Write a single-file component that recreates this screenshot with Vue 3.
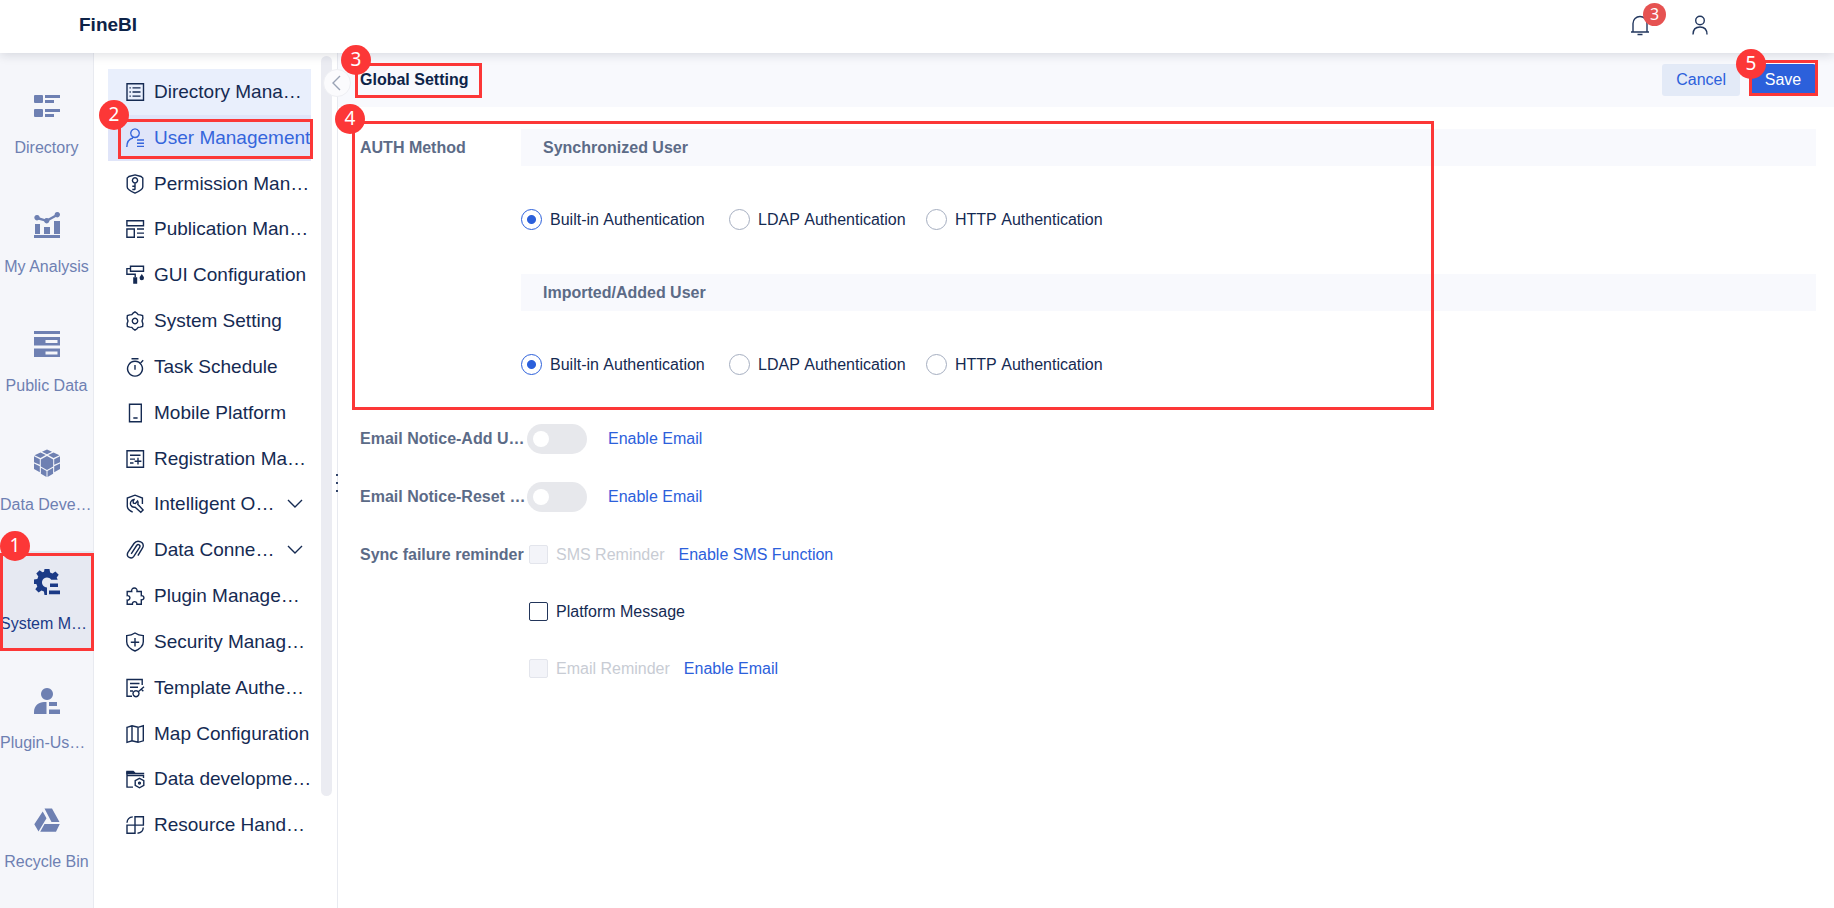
<template>
  <div class="page">
    <header class="topbar">
      <h1 class="brand">FineBI</h1>
      <div class="topbar-actions">
        <button class="icon-btn" type="button" aria-label="Notifications">
          <svg class="icon" viewBox="0 0 20 20">
            <path d="M1 17h18M3 17V8.500a7 7 0 0 1 14 0V17M7.500 19.500h5" />
          </svg>
          <span class="count">3</span>
        </button>
        <button class="icon-btn" type="button" aria-label="Account">
          <svg class="icon" viewBox="0 0 20 20">
            <circle cx="10" cy="5.500" r="4.300" />
            <path d="M3 19.500c0-5 3-7.500 7-7.500s7 2.500 7 7.500" />
          </svg>
        </button>
      </div>
    </header>

    <div class="body">
      <nav class="rail">
        <a
          v-for="item in modules"
          :key="item.label"
          href="#"
          class="rail-item"
          :class="{ active: item.active }"
        >
          <svg class="rail-icon" viewBox="0 0 26 26">
            <path class="solid" fill-rule="evenodd" :d="item.solid" />
            <path v-if="item.line" class="stroke" :d="item.line" />
          </svg>
          <span class="rail-label" :class="{ clipped: item.clipped }">{{ item.label }}</span>
          <span v-if="item.active" class="mark mark-module"><b class="step">1</b></span>
        </a>
      </nav>

      <aside class="sidebar">
        <nav class="menu">
          <a
            v-for="item in menu"
            :key="item.label"
            href="#"
            class="menu-item"
            :class="item.state"
          >
            <svg class="icon" viewBox="0 0 20 20">
              <path :d="item.line" />
              <path v-if="item.solid" class="solid" :d="item.solid" />
            </svg>
            <span class="menu-label">{{ item.label }}</span>
            <svg v-if="item.children" class="caret" viewBox="0 0 16 16">
              <path d="M1 4l7 7 7-7" />
            </svg>
            <span v-if="item.state === 'selected'" class="mark mark-menu"><b class="step">2</b></span>
          </a>
        </nav>
        <div class="scroll-thumb"></div>
        <button class="collapse" type="button" aria-label="Collapse menu">
          <svg viewBox="0 0 16 16"><path d="M11 1L4 8l7 7" /></svg>
        </button>
        <span class="grip"><i></i><i></i><i></i></span>
      </aside>

      <main class="content">
        <div class="toolbar">
          <h2 class="title">Global Setting<span class="mark mark-title"><b class="step">3</b></span></h2>
          <div class="buttons">
            <button class="btn" type="button">Cancel</button>
            <button class="btn primary" type="button">
              Save<span class="mark mark-save"><b class="step">5</b></span>
            </button>
          </div>
        </div>

        <form class="form" @submit.prevent>
          <section class="auth">
            <span class="label auth-label">AUTH Method</span>
            <div class="auth-groups">
              <div
                v-for="group in authGroups"
                :key="group.name"
                role="radiogroup"
                :aria-label="group.title"
              >
                <h3 class="band">{{ group.title }}</h3>
                <div class="radios">
                  <label v-for="method in methods" :key="method" class="choice">
                    <input
                      v-model="group.value"
                      type="radio"
                      class="radio"
                      :name="group.name"
                      :value="method"
                    />
                    <span>{{ method }} Authentication</span>
                  </label>
                </div>
              </div>
            </div>
            <span class="mark mark-auth"><b class="step">4</b></span>
          </section>

          <div v-for="notice in notices" :key="notice.id" class="row">
            <label class="label" :for="notice.id">{{ notice.label }}</label>
            <input :id="notice.id" v-model="notice.on" type="checkbox" class="switch" />
            <a href="#" class="link notice-link">Enable Email</a>
          </div>

          <div class="row sync">
            <span class="label">Sync failure reminder</span>
            <div class="reminders">
              <div v-for="item in reminders" :key="item.label" class="reminder">
                <label class="choice" :class="{ disabled: item.disabled }">
                  <input v-model="item.on" type="checkbox" class="check" :disabled="item.disabled" />
                  <span>{{ item.label }}</span>
                </label>
                <a v-if="item.link" href="#" class="link">{{ item.link }}</a>
              </div>
            </div>
          </div>
        </form>
      </main>
    </div>
  </div>
</template>

<script setup>
import { ref } from 'vue';

const modules = [
  {
    label: 'Directory',
    solid: 'M1 2h7a1 1 0 0 1 1 1v6a1 1 0 0 1-1 1H1a1 1 0 0 1-1-1V3a1 1 0 0 1 1-1zM1 16h7a1 1 0 0 1 1 1v6a1 1 0 0 1-1 1H1a1 1 0 0 1-1-1v-6a1 1 0 0 1 1-1zM11 2h15v3H11zM11 7h9v3h-9zM11 16h15v3H11zM11 21h9v3h-9z',
  },
  {
    label: 'My Analysis',
    solid: 'M0 23h26v3H0zM1 12h5v10H1zM10 15h6v7h-6zM20 9h6v13h-6zM3 3a2.700 2.700 0 1 0 .01 0zM12.700 6a2.700 2.700 0 1 0 .01 0zM23.300 0a2.700 2.700 0 1 0 .01 0z',
    line: 'M3 6l9.700 2.800L23 3',
  },
  {
    label: 'Public Data',
    solid: 'M0 0h26v3H0zM0 6h26v8.500H0zM11.500 9v3h12V9zM0 17.500h26V26H0zM11.500 20.500v3h12v-3z',
  },
  {
    label: 'Data Deve…',
    clipped: true,
    solid: 'M13-.5l5 2.300-5 2.400-5-2.400zM6.500 2.400l5.300 2.500-5.300 3-6-2.700zM19.500 2.400l6 2.800-6 2.700-5.300-3zM13 6l6.200 3.500v7L13 20l-6.200-3.500v-7zM0 6.300l5.800 2.900v5.600L0 12.300zM26 6.300v6l-5.800 2.500V9.200zM0 13.500l5.800 2.700v6L0 19zM26 13.500V19l-5.800 3.200v-6zM6.900 17.700l5.600 3.200v6l-5.600-3.200zM19.100 17.700v6l-5.600 3.200v-6z',
  },
  {
    label: 'System M…',
    clipped: true,
    active: true,
    solid: 'M10.500 0h5l.6 3.400 2.400 1 2.900-2 3.300 3.300-2 2.900 1 2.200h-6.500A5 5 0 1 0 13 18.500V26h-2.500l-.6-3.400-2.400-1-2.900 2-3.300-3.300 2-2.900-1-2.400L0 15v-4.500l3.300-.6 1-2.400-2-2.900 3.300-3.300 2.900 2 1.500-.6zM16 14.500h8v3.500h-8zM15 21.500h11v3.800H15z',
  },
  {
    label: 'Plugin-Us…',
    clipped: true,
    solid: 'M13 0a6 6 0 1 0 .01 0zM12.500 14v12H0v-2C0 17.500 5 14 10 14zM15 14h8v4h-8zM15 21.500h11V26H15z',
  },
  {
    label: 'Recycle Bin',
    solid: 'M10.500 1.500h7.500l7.500 13.500h-8zM8.700 4.500l3.800 6.800-8 13.200L.3 17.300zM10.500 17h15.300l-3.800 7.800H6.200z',
  },
];

const menu = [
  {
    label: 'Directory Mana…',
    state: 'hover',
    line: 'M2 1.800h16.500v16.400H2zM7.500 5.900h8M7.500 10h8M7.500 14.100h8M4.500 5.900h1.300M4.500 10h1.300M4.500 14.100h1.300',
  },
  {
    label: 'User Management',
    state: 'selected',
    line: 'M10 .9a4.300 4.300 0 1 0 .01 0zM1.800 19c0-5 2.500-8 6.200-9M12 12h7M12 15.200h7M12 18.400h7',
  },
  {
    label: 'Permission Man…',
    line: 'M10 .9l6 1.600L17.800 4v9c0 2.300-3.800 4.400-7.800 6.100C6 17.400 2.200 15.300 2.200 13V4L4 2.500zM10 3.800a2.600 2.600 0 1 0 .01 0zM10 9v6.800M7.300 12.300H10M7.300 15.500H10',
  },
  {
    label: 'Publication Man…',
    line: 'M1.900 1.800h16.600v5H1.900zM1.900 10h7.400v8.200H1.900zM12 10h7M12 14.100h7M12 18.200h7',
  },
  {
    label: 'GUI Configuration',
    line: 'M5.500 1.300h13v5h-13zM5.500 3.600H1.900v5.600h8.300v3',
    solid: 'M8.200 12.300h4v6.500h-4zM16.800 9c1.200 1.800 2.200 2.700 2.200 4a2.200 2.200 0 0 1-4.400 0c0-1.300 1-2.200 2.200-4z',
  },
  {
    label: 'System Setting',
    line: 'M8 2.200L10 .9l2 1.300 1.200 1.500 2 .2 2.400.6.300 2.600-.9 2.900.9 2.900-.3 2.600-2.400.6-2 .2-1.200 1.500-2 1.300-2-1.300-1.200-1.500-2-.2-2.400-.6-.3-2.600.9-2.900-.9-2.900.3-2.600 2.400-.6 2-.2zM10 7.300a2.700 2.700 0 1 0 .01 0z',
  },
  {
    label: 'Task Schedule',
    line: 'M10 4.300a7.400 7.400 0 1 0 .01 0zM10 8v4.700M6.500 1.700h7M15.800 5.700l2.400-2.400',
  },
  {
    label: 'Mobile Platform',
    line: 'M4.500 1.300h11.800v17.400H4.500zM8.300 15h4.300',
  },
  {
    label: 'Registration Ma…',
    line: 'M2 1.800h16.500v16.400H2zM5 6.200h10.500M5 10.100h5M5 14h3.500M13 8.800v6.800M9.600 12.200h6.800',
  },
  {
    label: 'Intelligent O…',
    children: true,
    line: 'M17.400 10V4L10 1.200 2.300 4v8.500c0 2.500 2.400 4.200 5.400 5.600M9 5.500a4 4 0 0 0-3.200 5.600 4 4 0 0 0 4.300 2.100l5.700 5 2.300-2.200-5.300-5.700A4 4 0 0 0 12.600 7l-2.200 2.500-2-.4-.3-1.700z',
  },
  {
    label: 'Data Conne…',
    children: true,
    line: 'M6.200 13.800l5.400-8.300c1.600-2 4.300-.3 3 1.900l-5.800 9c-2.300 3.300-8 .8-6-3.800L9 3.500c3.300-4.700 11.500-1.200 8.700 4.200l-4.800 8',
  },
  {
    label: 'Plugin Manage…',
    line: 'M2.200 5.500h4.500c-1-4.700 6.300-4.700 5.300 0h4.300v4.200c3.500-.6 3.500 4.700 0 4.100v4.500h-4.400c.4-3.600-4.900-3.600-4.500 0H2.200v-4.200c3.600.3 3.600-4.900 0-4.500z',
  },
  {
    label: 'Security Manag…',
    line: 'M10 1c2.600 1.800 5.500 2.500 8.300 2.600v6.200c0 4.400-3.600 7.300-8.300 9.200-4.700-1.900-8.300-4.800-8.300-9.200V3.600C4.500 3.500 7.400 2.800 10 1zM10 6v8.400M5.800 10.200h8.400',
  },
  {
    label: 'Template Authe…',
    line: 'M17.200 7V1.500H2v16.700h5M5 5.500h9.500M5 9.300h8M5 13h3M11 12.700a3 3 0 1 0 .01 0zM13.300 13.700L19 8.700M16.300 11l2 2.200',
  },
  {
    label: 'Map Configuration',
    line: 'M2 3.300l5-1.500 6 1.500 5.300-1.500v15l-5.300 1.500-6-1.500-5 1.500zM7 1.800v15M13 3.300v15',
  },
  {
    label: 'Data developme…',
    line: 'M2 2.500v15.600h6M2 6.500h16.500V9M14.500 9.300l4.300 2.300v4.800l-4.300 2.400-4.300-2.400v-4.800zM14.500 13.200a.9.9 0 1 0 .01 0z',
    solid: 'M1.300 1.700h7.200l2 2h8.700v1.600H1.300z',
  },
  {
    label: 'Resource Hand…',
    line: 'M10 1.800h8.400v8.300H10zM2 10.100h8v8.100H2zM2 7.800c.2-3.500 2.300-5.600 5.800-5.900M18.300 12.500c-.2 3.200-2.300 5.400-5.800 5.700',
  },
];

const methods = ['Built-in', 'LDAP', 'HTTP'];

const authGroups = ref([
  { name: 'sync-user', title: 'Synchronized User', value: 'Built-in' },
  { name: 'added-user', title: 'Imported/Added User', value: 'Built-in' },
]);

const notices = ref([
  { id: 'notice-add', label: 'Email Notice-Add U…', on: false },
  { id: 'notice-reset', label: 'Email Notice-Reset …', on: false },
]);

const reminders = ref([
  { label: 'SMS Reminder', link: 'Enable SMS Function', disabled: true, on: false },
  { label: 'Platform Message', disabled: false, on: false },
  { label: 'Email Reminder', link: 'Enable Email', disabled: true, on: false },
]);
</script>

<style>
body {
  background: #fff;
}
</style>

<style scoped>
.page {
  min-height: 100vh;
  display: flex;
  flex-direction: column;
  font-family: "Liberation Sans", Arial, sans-serif;
  font-size: 16px;
  line-height: 20px;
  color: #152a52;
}

.page * {
  box-sizing: border-box;
}

a {
  text-decoration: none;
}

button {
  font: inherit;
  border: 0;
  padding: 0;
  cursor: pointer;
}

svg {
  flex: none;
  overflow: visible;
  fill: none;
  stroke: currentColor;
  stroke-width: 1.4;
}

.icon {
  width: 20px;
  height: 20px;
}

.solid {
  fill: currentColor;
  stroke: none;
}

/* top bar */
.topbar {
  position: relative;
  z-index: 1;
  height: 53px;
  padding: 0 124px 3px 79px;
  display: flex;
  align-items: center;
  justify-content: space-between;
  background: #fff;
  box-shadow: 0 2px 10px rgba(20, 30, 50, 0.14);
}

.brand {
  margin: 0;
  font-size: 19px;
  line-height: 20px;
  color: #0d2348;
}

.topbar-actions {
  display: flex;
  gap: 40px;
}

.icon-btn {
  position: relative;
  display: flex;
  background: none;
  color: #22375e;
}

.count {
  position: absolute;
  left: 13px;
  top: -12px;
  width: 23px;
  height: 23px;
  border-radius: 12px;
  background: #e65251;
  color: #fff;
  font-family: "Noto Sans", sans-serif;
  font-size: 16px;
  line-height: 22px;
  text-align: center;
}

.body {
  flex: 1;
  display: flex;
}

/* module rail */
.rail {
  flex: none;
  width: 94px;
  padding-top: 22px;
  display: flex;
  flex-direction: column;
  gap: 22px;
  background: #f5f6fa;
  border-right: 1px solid #e8eaf0;
}

.rail-item {
  position: relative;
  height: 97px;
  padding-top: 18px;
  display: flex;
  flex-direction: column;
  align-items: center;
  gap: 19px;
  color: #6e80b2;
}

.rail-item.active {
  background: #e6e9f2;
  color: #1b3a86;
}

.rail-icon {
  width: 26px;
  height: 26px;
}

.stroke {
  stroke-width: 2.4;
}

.rail-label {
  white-space: nowrap;
}

.rail-label.clipped {
  align-self: flex-start;
}

/* side menu */
.sidebar {
  position: relative;
  flex: none;
  width: 244px;
  padding-left: 14px;
  display: flex;
  gap: 10px;
  border-right: 1px solid #e8eaf0;
}

.menu {
  width: 203px;
  padding: 16px 0 60px;
  display: flex;
  flex-direction: column;
}

.menu-item {
  position: relative;
  flex: 1;
  padding: 0 8px 0 17px;
  display: flex;
  align-items: center;
  gap: 9px;
  font-size: 19px;
  line-height: 24px;
  color: #152a52;
}

.menu-item.hover {
  background: #e9effc;
}

.menu-item.selected {
  background: #e0e5f9;
  color: #3565dc;
}

.menu-label {
  flex: 1;
  white-space: nowrap;
}

.caret {
  width: 16px;
  height: 16px;
}

.scroll-thumb {
  width: 11px;
  margin: 3px 0 112px;
  border-radius: 6px;
  background: #ebecf2;
}

.collapse {
  position: absolute;
  right: -14px;
  top: 16px;
  width: 28px;
  height: 28px;
  display: flex;
  align-items: center;
  justify-content: center;
  border: 1px solid #eeeff3;
  border-radius: 50%;
  background: #fbfbfd;
  color: #9aa3b5;
}

.collapse svg {
  width: 16px;
  height: 16px;
}

.grip {
  position: absolute;
  right: -1px;
  top: 421px;
  display: flex;
  flex-direction: column;
  gap: 6px;
}

.grip i {
  width: 2px;
  height: 2px;
  background: #33466b;
}

/* content */
.content {
  flex: 1;
  min-width: 0;
  font-kerning: none;
}

.toolbar {
  height: 54px;
  padding: 0 18px 0 22px;
  display: flex;
  align-items: center;
  justify-content: space-between;
  background: #f8f9fd;
}

.title {
  position: relative;
  margin: 0;
  font-size: 16px;
  line-height: 20px;
  color: #0d2348;
}

.buttons {
  display: flex;
  gap: 10px;
}

.btn {
  position: relative;
  height: 32px;
  min-width: 66px;
  padding: 0 14px;
  border-radius: 3px;
  background: #e3eaf7;
  color: #2c60db;
}

.btn.primary {
  background: #2c60db;
  color: #fff;
}

.form {
  padding: 22px 18px 40px 22px;
}

.label {
  flex: none;
  width: 167px;
  font-weight: 700;
  color: #5c6b87;
  white-space: nowrap;
}

.auth {
  position: relative;
  display: flex;
  padding-bottom: 1px;
}

.auth-label {
  width: 161px;
  line-height: 37px;
}

.auth-groups {
  flex: 1;
  display: flex;
  flex-direction: column;
  gap: 10px;
}

.band {
  margin: 0;
  padding-left: 22px;
  background: #f8f9fd;
  font-size: 16px;
  line-height: 37px;
  color: #5c6b87;
}

.radios {
  padding: 43px 0 34px;
  display: grid;
  grid-template-columns: 208px 197px auto;
  justify-content: start;
  align-items: center;
}

.choice {
  display: flex;
  align-items: center;
  gap: 8px;
  white-space: nowrap;
}

.choice.disabled {
  color: #c8ccd4;
}

.radio,
.check,
.switch {
  appearance: none;
  flex: none;
  margin: 0;
}

.radio {
  width: 21px;
  height: 21px;
  border: 1px solid #a5aec0;
  border-radius: 50%;
}

.radio:checked {
  border-color: #2c60db;
  background: radial-gradient(circle, #2c60db 4px, transparent 5px);
}

.row {
  height: 58px;
  display: flex;
  align-items: center;
}

.switch {
  width: 60px;
  height: 30px;
  padding: 7px 6px;
  border-radius: 15px;
  background: #e7e8ec;
}

.switch::before {
  content: "";
  display: block;
  width: 16px;
  height: 16px;
  border-radius: 50%;
  background: #fff;
}

.switch:checked {
  padding-left: 38px;
  background: #2c60db;
}

.link {
  color: #2c60db;
}

.notice-link {
  margin-left: 21px;
}

.sync {
  height: auto;
  align-items: flex-start;
}

.sync .label {
  line-height: 57px;
}

.reminders {
  padding-left: 2px;
}

.reminder {
  height: 57px;
  display: flex;
  align-items: center;
  gap: 14px;
}

.check {
  width: 19px;
  height: 19px;
  border: 1px solid #22355a;
  border-radius: 2px;
  background: #fff;
}

.check:checked {
  background: #2c60db;
}

.check:disabled {
  border-color: #e3e5ec;
  background: #f3f4f9;
}

/* numbered step marks laid over the screen */
.mark {
  position: absolute;
  z-index: 2;
  border: 3px solid #fc3737;
  pointer-events: none;
}

.step {
  position: absolute;
  width: 30px;
  height: 30px;
  border-radius: 50%;
  background: #fc3737;
  color: #fff;
  font-family: "Noto Sans", sans-serif;
  font-size: 19px;
  font-weight: 400;
  line-height: 28px;
  text-align: center;
}

.mark-module {
  left: 0;
  top: 2px;
  width: 94px;
  height: 98px;
}

.mark-module .step {
  left: -3px;
  top: -25px;
}

.mark-menu {
  left: 10px;
  top: 4px;
  width: 195px;
  height: 40px;
}

.mark-menu .step {
  left: -22px;
  top: -22px;
}

.mark-title {
  left: -5px;
  top: -7px;
  width: 127px;
  height: 35px;
}

.mark-title .step {
  left: -17px;
  top: -21px;
}

.mark-auth {
  left: -8px;
  top: -8px;
  width: 1082px;
  height: 289px;
}

.mark-auth .step {
  left: -20px;
  top: -20px;
}

.mark-save {
  left: -1px;
  top: -4px;
  width: 69px;
  height: 36px;
}

.mark-save .step {
  left: -16px;
  top: -14px;
}
</style>
